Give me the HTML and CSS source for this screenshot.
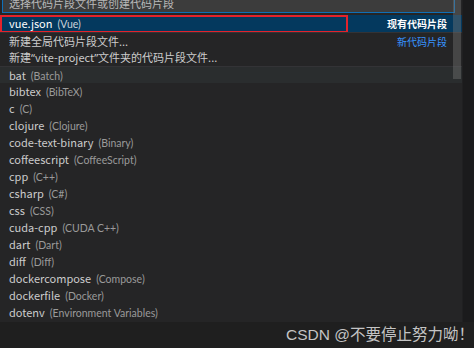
FILE: index.html
```html
<!DOCTYPE html>
<html lang="zh-CN">
<head>
<meta charset="utf-8">
<title>Quick Pick</title>
<link rel="stylesheet" href="styles.css">
</head>
<body>
<div class="screen">
  <div class="main">
    <div class="panel">
      <div class="header">
        <div class="input">选择代码片段文件或创建代码片段</div>
      </div>
      <div class="list">
        <div class="row selected">
          <span class="label">vue.json</span><span class="desc">(Vue)</span>
          <span class="group">现有代码片段</span>
          <span class="mark"></span>
        </div>
        <div class="row sep">
          <span class="label">新建全局代码片段文件...</span>
          <span class="group link">新代码片段</span>
        </div>
        <div class="row">
          <span class="label">新建<span class="q">“</span>vite-project<span class="q">”</span>文件夹的代码片段文件...</span>
        </div>
        <div class="row sep hover"><span class="label">bat</span><span class="desc">(Batch)</span></div>
        <div class="row"><span class="label">bibtex</span><span class="desc">(BibTeX)</span></div>
        <div class="row"><span class="label">c</span><span class="desc">(C)</span></div>
        <div class="row"><span class="label">clojure</span><span class="desc">(Clojure)</span></div>
        <div class="row"><span class="label">code-text-binary</span><span class="desc">(Binary)</span></div>
        <div class="row"><span class="label">coffeescript</span><span class="desc">(CoffeeScript)</span></div>
        <div class="row"><span class="label">cpp</span><span class="desc">(C++)</span></div>
        <div class="row"><span class="label">csharp</span><span class="desc">(C#)</span></div>
        <div class="row"><span class="label">css</span><span class="desc">(CSS)</span></div>
        <div class="row"><span class="label">cuda-cpp</span><span class="desc">(CUDA C++)</span></div>
        <div class="row"><span class="label">dart</span><span class="desc">(Dart)</span></div>
        <div class="row"><span class="label">diff</span><span class="desc">(Diff)</span></div>
        <div class="row"><span class="label">dockercompose</span><span class="desc">(Compose)</span></div>
        <div class="row"><span class="label">dockerfile</span><span class="desc">(Docker)</span></div>
        <div class="row"><span class="label">dotenv</span><span class="desc">(Environment Variables)</span></div>
      </div>
      <div class="scrollbar"></div>
    </div>
    <div class="side"></div>
  </div>
  <div class="footer">
    <span class="watermark">CSDN @不要停止努力呦！</span>
  </div>
</div>
</body>
</html>
```

FILE: styles.css
```css
* { box-sizing: border-box; }
html, body {
  margin: 0;
  padding: 0;
  background: #1e1e1e;
}
.screen {
  width: 474px;
  height: 348px;
  overflow: hidden;
  display: flex;
  flex-direction: column;
  font-family: "Noto Sans CJK SC", "Noto Sans", sans-serif;
}
.main {
  display: flex;
  height: 322px;
}
.panel {
  position: relative;
  width: 462px;
  background: #252526;
  display: flex;
  flex-direction: column;
}
.side {
  flex: 1;
  background: #1b1b1c;
  border-left: 1px solid #202021;
}
.header {
  height: 15px;
  padding: 0 7px 0 2px;
  overflow: hidden;
}
.input {
  margin-top: -7px;
  height: 20px;
  background: #3c3c3c;
  border: 1px solid #0e70b8;
  color: #b8b8b8;
  font-size: 11px;
  line-height: 18px;
  padding-left: 6px;
  white-space: nowrap;
}
.list {
  flex: 1;
}
.row {
  position: relative;
  height: 17px;
  line-height: 16px;
  display: flex;
  align-items: baseline;
  padding-left: 9px;
  padding-right: 15px;
  white-space: nowrap;
}
.row.sep {
  border-top: 1px solid #333336;
}
.row.selected {
  background: #04395e;
}
.row.hover {
  background: #2a2d2e;
}
.label {
  color: #cccccc;
  font-size: 11px;
}
.q {
  font-family: "Noto Sans", sans-serif;
}
.selected .label {
  color: #ffffff;
}
.desc {
  color: #9a9a9a;
  font-family: "Lato", "Noto Sans", sans-serif;
  font-size: 10.5px;
  margin-left: 5px;
}
.selected .desc {
  color: #c9d2da;
}
.group {
  margin-left: auto;
  color: #ffffff;
  font-size: 10px;
  font-weight: 700;
}
.group.link {
  color: #3794ff;
  font-weight: 400;
}
.mark {
  position: absolute;
  left: 0;
  top: 0;
  width: 348px;
  height: 18px;
  border: 2px solid #e3232c;
}
.scrollbar {
  position: absolute;
  right: 1px;
  top: 0;
  width: 8px;
  height: 79px;
  background: rgba(121, 121, 121, 0.4);
}
.footer {
  flex: 1;
  display: flex;
  justify-content: flex-end;
  align-items: center;
  padding-right: 0;
  background: #1f1f1f;
}
.watermark {
  color: #c4c4c4;
  font-family: "Liberation Sans", "Noto Sans CJK SC", sans-serif;
  font-size: 15.5px;
  line-height: 20px;
}
```
